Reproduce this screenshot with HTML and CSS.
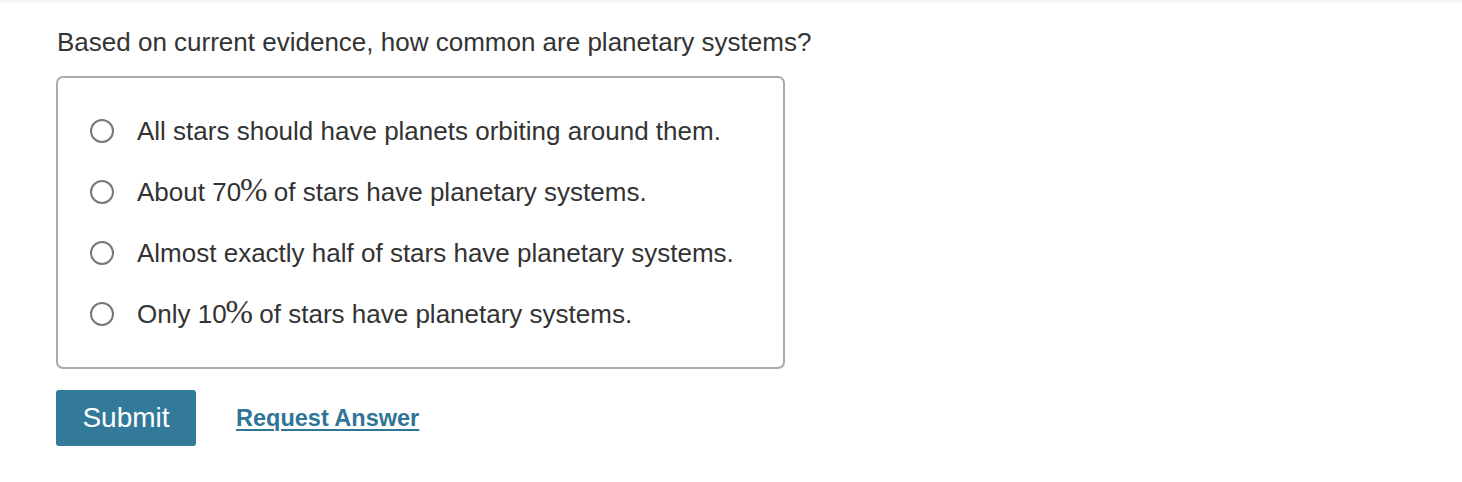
FILE: index.html
```html
<!DOCTYPE html>
<html>
<head>
<meta charset="utf-8">
<link rel="stylesheet" href="styles.css">
</head>
<body>
<div class="topbar"></div>
<main class="content">
  <p class="question">Based on current evidence, how common are planetary systems?</p>
  <div class="choices">
    <label class="choice"><span class="radio"></span><span class="label">All stars should have planets orbiting around them.</span></label>
    <label class="choice"><span class="radio"></span><span class="label">About 70<span class="pct">%</span> of stars have planetary systems.</span></label>
    <label class="choice"><span class="radio"></span><span class="label">Almost exactly half of stars have planetary systems.</span></label>
    <label class="choice"><span class="radio"></span><span class="label">Only 10<span class="pct">%</span> of stars have planetary systems.</span></label>
  </div>
  <div class="actions">
    <button class="submit">Submit</button>
    <a class="request" href="#">Request Answer</a>
  </div>
</main>
</body>
</html>
```
FILE: styles.css
```css
html, body {
  margin: 0;
  padding: 0;
  background: #fff;
}
body {
  font-family: "Liberation Sans", Arial, sans-serif;
  color: #333;
}
.topbar {
  height: 3px;
  background: #f7f7f7;
}
.content {
  padding-left: 56px;
}
.question {
  margin: 0;
  padding-top: 24px;
  padding-left: 1px;
  font-size: 26px;
  line-height: 30px;
}
.choices {
  margin-top: 19px;
  width: 725px;
  border: 2px solid #aaa;
  border-radius: 7px;
  padding: 22px 0 23px 0;
  display: flex;
  flex-direction: column;
}
.choice {
  display: flex;
  align-items: center;
  height: 61px;
  padding-left: 32px;
  font-size: 26px;
  line-height: 30px;
}
.radio {
  box-sizing: border-box;
  width: 24px;
  height: 24px;
  border: 2px solid #777;
  border-radius: 50%;
  flex: none;
  margin-right: 23px;
}
.pct {
  font-family: "Liberation Serif", "DejaVu Serif", serif;
  font-size: 33px;
  line-height: 0;
  margin-left: -1px;
  margin-right: -1px;
}
.actions {
  margin-top: 21px;
  display: flex;
  align-items: center;
  gap: 40px;
}
.submit {
  width: 140px;
  height: 56px;
  background: #337a9a;
  color: #fff;
  border: none;
  border-radius: 3px;
  font-family: "Liberation Sans", Arial, sans-serif;
  font-size: 28px;
  padding: 0;
}
.request {
  color: #2f7597;
  font-weight: bold;
  font-size: 23.5px;
  text-decoration: underline;
  text-underline-offset: 3px;
  text-decoration-thickness: 2px;
}
```
